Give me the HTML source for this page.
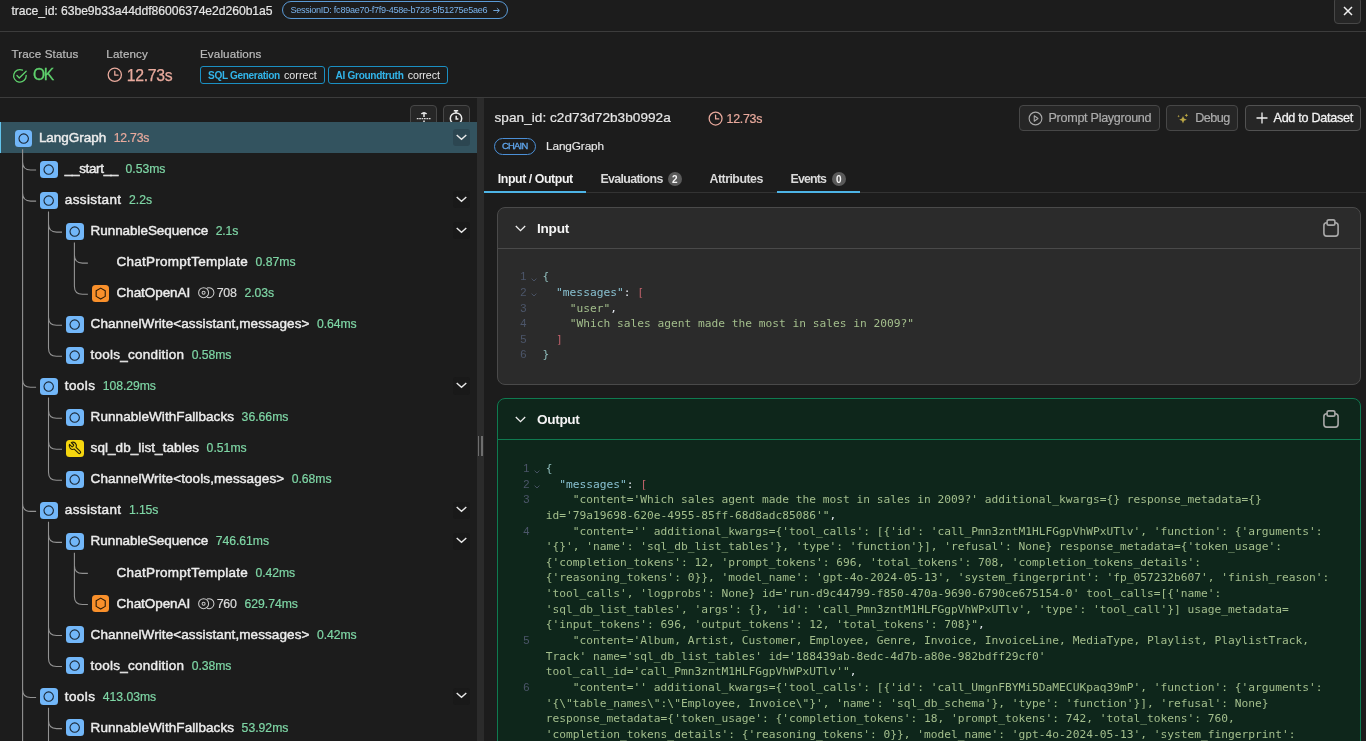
<!DOCTYPE html>
<html lang="en"><head><meta charset="utf-8"><title>Trace details</title>
<style>
html,body{margin:0;padding:0;}
html{background:#1c1c1c;}
body{width:1366px;height:741px;overflow:hidden;background:#1c1c1c;font-family:"Liberation Sans", sans-serif;position:relative;color:#e6e6e6;will-change:transform;}
.abs{position:absolute;}
.hl{position:absolute;height:1px;background:#3c3c3c;}
.btn{position:absolute;box-sizing:border-box;background:#262626;border:1px solid #474747;border-radius:4px;}
.ico{position:absolute;width:17.4px;height:17.2px;border-radius:3.5px;}
.chev{position:absolute;width:17.4px;height:17.2px;border-radius:3px;}
svg{position:absolute;overflow:visible;}
.code span{font-family:"DejaVu Sans Mono", "Liberation Mono", monospace;}
</style></head><body>

<span id="t1" style="position:absolute;left:11.5px;top:2.50px;height:16px;line-height:16px;font-size:12.2px;color:#e6e6e6;white-space:pre;-webkit-text-stroke:0.2px #e6e6e6;letter-spacing:-0.063px;">trace_id: 63be9b33a44ddf86006374e2d260b1a5</span>
<div class="abs" style="left:282px;top:1.3px;width:226px;height:18px;box-sizing:border-box;border:1px solid #5a9ad6;border-radius:9px;"></div>
<span id="t2" style="position:absolute;left:290.4px;top:4.40px;height:12px;line-height:12px;font-size:9.1px;color:#7ab3ec;white-space:pre;letter-spacing:-0.275px;">SessionID: fc89ae70-f7f9-458e-b728-5f51275e5ae6</span>
<svg style="left:492.5px;top:7.2px" width="7" height="7" viewBox="0 0 7 7"><path d="M0.3 3.5H6.2M3.9 1.2L6.3 3.5L3.9 5.8" fill="none" stroke="#7ab3ec" stroke-width="0.9"/></svg>
<div class="btn" style="left:1334px;top:-3px;width:27px;height:27px;"></div>
<svg style="left:1342.5px;top:6px" width="10" height="10" viewBox="0 0 10 10"><path d="M1 1L9 9M9 1L1 9" stroke="#f0f0f0" stroke-width="1.5" fill="none"/></svg>
<div class="hl" style="left:0;top:31px;width:1366px;"></div>
<span id="t3" style="position:absolute;left:11.5px;top:46.20px;height:15px;line-height:15px;font-size:11.6px;color:#bcbcbc;white-space:pre;-webkit-text-stroke:0.2px #bcbcbc;letter-spacing:0.134px;">Trace Status</span>
<span id="t4" style="position:absolute;left:106.3px;top:46.20px;height:15px;line-height:15px;font-size:11.6px;color:#bcbcbc;white-space:pre;-webkit-text-stroke:0.2px #bcbcbc;letter-spacing:0.156px;">Latency</span>
<span id="t5" style="position:absolute;left:200px;top:46.20px;height:15px;line-height:15px;font-size:11.6px;color:#bcbcbc;white-space:pre;-webkit-text-stroke:0.2px #bcbcbc;letter-spacing:0.141px;">Evaluations</span>
<svg style="left:12.1px;top:67.6px" width="15.8" height="15.8" viewBox="0 0 24 24"><path d="M21.5 11.1V12a9.5 9.5 0 1 1-5.6-8.7" fill="none" stroke="#5fd16d" stroke-width="2" stroke-linecap="round"/><path d="M7.5 11.5l3.6 3.6L21.5 4.8" fill="none" stroke="#5fd16d" stroke-width="2" stroke-linecap="round" stroke-linejoin="round"/></svg>
<span id="t6" style="position:absolute;left:33px;top:65.40px;height:20px;line-height:20px;font-size:15.6px;color:#5fd16d;white-space:pre;-webkit-text-stroke:0.3px #5fd16d;letter-spacing:-1.266px;">OK</span>
<svg style="left:107.1px;top:67.4px" width="15.6" height="15.6" viewBox="0 0 24 24"><circle cx="12" cy="12" r="10.2" fill="none" stroke="#e9aa9d" stroke-width="2"/><path d="M12 6.5V12.6H17" fill="none" stroke="#e9aa9d" stroke-width="2" stroke-linecap="round" stroke-linejoin="round"/></svg>
<span id="t7" style="position:absolute;left:126.8px;top:64.90px;height:21px;line-height:21px;font-size:15.8px;color:#e9aa9d;white-space:pre;-webkit-text-stroke:0.25px #e9aa9d;letter-spacing:-0.340px;">12.73s</span>
<div class="abs" style="left:200px;top:66px;width:125px;height:18px;box-sizing:border-box;border:1px solid #1b8fc2;border-radius:3px;"></div>
<span id="t8" style="position:absolute;left:208px;top:68.80px;height:13px;line-height:13px;font-size:10.1px;color:#32b5ea;white-space:pre;font-weight:bold;letter-spacing:-0.347px;">SQL Generation</span>
<span id="t9" style="position:absolute;left:284px;top:68.30px;height:14px;line-height:14px;font-size:10.7px;color:#e6e6e6;white-space:pre;letter-spacing:0.018px;">correct</span>
<div class="abs" style="left:328px;top:66px;width:120px;height:18px;box-sizing:border-box;border:1px solid #1b8fc2;border-radius:3px;"></div>
<span id="t10" style="position:absolute;left:335.5px;top:68.80px;height:13px;line-height:13px;font-size:10.1px;color:#32b5ea;white-space:pre;font-weight:bold;letter-spacing:-0.309px;">AI Groundtruth</span>
<span id="t11" style="position:absolute;left:407.8px;top:68.30px;height:14px;line-height:14px;font-size:10.7px;color:#e6e6e6;white-space:pre;letter-spacing:-0.096px;">correct</span>
<div class="hl" style="left:0;top:97px;width:1366px;"></div>
<div class="btn" style="left:410px;top:105px;width:27px;height:27px;"></div>
<svg style="left:415.7px;top:110.6px" width="16" height="12" viewBox="0 0 16 12"><path d="M8 1.2V6M5.4 3.1Q8 0.2 10.6 3.1" fill="none" stroke="#ececec" stroke-width="1.5"/><path d="M0.8 7.6H15.2" stroke="#dcdcdc" stroke-width="1.3" stroke-dasharray="1.7 0.7" fill="none"/><path d="M8 9.6V11.2" stroke="#ececec" stroke-width="1.5"/></svg>
<div class="btn" style="left:443px;top:105px;width:27px;height:27px;"></div>
<svg style="left:449.4px;top:109.6px" width="14" height="16" viewBox="0 0 14 16"><circle cx="7" cy="8.6" r="5.7" fill="none" stroke="#ececec" stroke-width="1.5"/><path d="M4.8 0.8H9.2M7 0.8V3M7.2 5.8V8.9H9.4" fill="none" stroke="#ececec" stroke-width="1.5"/></svg>
<div class="abs" style="left:0;top:122px;width:477px;height:31px;background:#33535f;"></div>
<div class="abs" style="left:0;top:122px;width:1.2px;height:31px;background:#62c3ec;"></div>
<svg style="left:0;top:0" width="477" height="741" viewBox="0 0 477 741"><path d="M22.6 149.3V745.0 M22.6 162.0Q22.6 170.0 30.6 170.0H36.1 M22.6 193.1Q22.6 201.1 30.6 201.1H36.1 M22.6 379.2Q22.6 387.2 30.6 387.2H36.1 M22.6 503.4Q22.6 511.4 30.6 511.4H36.1 M22.6 689.5Q22.6 697.5 30.6 697.5H36.1 M48.5 211.4V348.2 M48.5 224.1Q48.5 232.1 56.5 232.1H62.0 M48.5 317.2Q48.5 325.2 56.5 325.2H62.0 M48.5 348.2Q48.5 356.2 56.5 356.2H62.0 M74.4 242.4V286.2 M74.4 255.1Q74.4 263.1 82.4 263.1H87.9 M74.4 286.2Q74.4 294.2 82.4 294.2H87.9 M48.5 397.5V472.3 M48.5 410.3Q48.5 418.3 56.5 418.3H62.0 M48.5 441.3Q48.5 449.3 56.5 449.3H62.0 M48.5 472.3Q48.5 480.3 56.5 480.3H62.0 M48.5 521.7V658.5 M48.5 534.4Q48.5 542.4 56.5 542.4H62.0 M48.5 627.5Q48.5 635.5 56.5 635.5H62.0 M48.5 658.5Q48.5 666.5 56.5 666.5H62.0 M74.4 552.7V596.5 M74.4 565.4Q74.4 573.4 82.4 573.4H87.9 M74.4 596.5Q74.4 604.5 82.4 604.5H87.9 M48.5 707.8V745.0 M48.5 720.6Q48.5 728.6 56.5 728.6H62.0" fill="none" stroke="#929292" stroke-width="1.1"/></svg>
<div class="ico" style="left:14.5px;top:129.5px;background:#72b7f9;"></div><svg style="left:14.5px;top:129.5px" width="17.4" height="17.2" viewBox="0 0 17.4 17.2"><circle cx="8.7" cy="8.6" r="4.7" fill="none" stroke="#1b2836" stroke-width="1.1"/></svg>
<span id="t12" style="position:absolute;left:38.9px;top:129.10px;height:18px;line-height:18px;font-size:13.5px;color:#ececec;white-space:pre;-webkit-text-stroke:0.45px #ececec;letter-spacing:-0.029px;">LangGraph</span>
<span id="t13" style="position:absolute;left:113.7px;top:130.10px;height:16px;line-height:16px;font-size:12.2px;color:#e9aa9d;white-space:pre;-webkit-text-stroke:0.2px #e9aa9d;letter-spacing:-0.182px;">12.73s</span>
<div class="chev" style="left:452.5px;top:129.2px;background:#2c4651;"></div>
<svg style="left:456.2px;top:133.9px" width="11" height="7" viewBox="0 0 11 7"><path d="M0.7 1L5.5 5.3L10.3 1" fill="none" stroke="#eaeaea" stroke-width="1.4"/></svg>
<div class="ico" style="left:40.4px;top:160.5px;background:#72b7f9;"></div><svg style="left:40.4px;top:160.5px" width="17.4" height="17.2" viewBox="0 0 17.4 17.2"><circle cx="8.7" cy="8.6" r="4.7" fill="none" stroke="#1b2836" stroke-width="1.1"/></svg>
<span id="t14" style="position:absolute;left:64.8px;top:160.13px;height:18px;line-height:18px;font-size:13.5px;color:#ececec;white-space:pre;-webkit-text-stroke:0.45px #ececec;letter-spacing:-0.344px;">__start__</span>
<span id="t15" style="position:absolute;left:125.5px;top:161.13px;height:16px;line-height:16px;font-size:12.2px;color:#7ed6a5;white-space:pre;-webkit-text-stroke:0.2px #7ed6a5;letter-spacing:-0.011px;">0.53ms</span>
<div class="ico" style="left:40.4px;top:191.5px;background:#72b7f9;"></div><svg style="left:40.4px;top:191.5px" width="17.4" height="17.2" viewBox="0 0 17.4 17.2"><circle cx="8.7" cy="8.6" r="4.7" fill="none" stroke="#1b2836" stroke-width="1.1"/></svg>
<span id="t16" style="position:absolute;left:64.8px;top:191.16px;height:18px;line-height:18px;font-size:13.5px;color:#ececec;white-space:pre;-webkit-text-stroke:0.45px #ececec;letter-spacing:0.380px;">assistant</span>
<span id="t17" style="position:absolute;left:129.1px;top:192.16px;height:16px;line-height:16px;font-size:12.2px;color:#7ed6a5;white-space:pre;-webkit-text-stroke:0.2px #7ed6a5;letter-spacing:-0.012px;">2.2s</span>
<div class="chev" style="left:452.5px;top:191.3px;background:#191919;"></div>
<svg style="left:456.2px;top:196.0px" width="11" height="7" viewBox="0 0 11 7"><path d="M0.7 1L5.5 5.3L10.3 1" fill="none" stroke="#eaeaea" stroke-width="1.4"/></svg>
<div class="ico" style="left:66.2px;top:222.5px;background:#72b7f9;"></div><svg style="left:66.2px;top:222.5px" width="17.4" height="17.2" viewBox="0 0 17.4 17.2"><circle cx="8.7" cy="8.6" r="4.7" fill="none" stroke="#1b2836" stroke-width="1.1"/></svg>
<span id="t18" style="position:absolute;left:90.6px;top:222.19px;height:18px;line-height:18px;font-size:13.5px;color:#ececec;white-space:pre;-webkit-text-stroke:0.45px #ececec;letter-spacing:-0.063px;">RunnableSequence</span>
<span id="t19" style="position:absolute;left:215.7px;top:223.19px;height:16px;line-height:16px;font-size:12.2px;color:#7ed6a5;white-space:pre;-webkit-text-stroke:0.2px #7ed6a5;letter-spacing:-0.137px;">2.1s</span>
<div class="chev" style="left:452.5px;top:222.3px;background:#191919;"></div>
<svg style="left:456.2px;top:227.0px" width="11" height="7" viewBox="0 0 11 7"><path d="M0.7 1L5.5 5.3L10.3 1" fill="none" stroke="#eaeaea" stroke-width="1.4"/></svg>

<span id="t20" style="position:absolute;left:116.5px;top:253.22px;height:18px;line-height:18px;font-size:13.5px;color:#ececec;white-space:pre;-webkit-text-stroke:0.45px #ececec;letter-spacing:0.260px;">ChatPromptTemplate</span>
<span id="t21" style="position:absolute;left:255.5px;top:254.22px;height:16px;line-height:16px;font-size:12.2px;color:#7ed6a5;white-space:pre;-webkit-text-stroke:0.2px #7ed6a5;letter-spacing:0.022px;">0.87ms</span>
<div class="ico" style="left:92.1px;top:284.6px;background:#f9902b;"></div><svg style="left:92.1px;top:284.6px" width="17.4" height="17.2" viewBox="0 0 17.4 17.2"><path d="M8.7 3.1L13.25 5.8V11.4L8.7 14.1L4.15 11.4V5.8Z" fill="none" stroke="#2a1a08" stroke-width="1.1" stroke-linejoin="round"/></svg>
<span id="t22" style="position:absolute;left:116.5px;top:284.25px;height:18px;line-height:18px;font-size:13.5px;color:#ececec;white-space:pre;-webkit-text-stroke:0.45px #ececec;letter-spacing:-0.060px;">ChatOpenAI</span>
<svg style="left:198.4px;top:287.4px" width="16" height="11.4" viewBox="0 0 16 11.4"><circle cx="5.6" cy="5.7" r="5" fill="none" stroke="#c8c8c8" stroke-width="1.05"/><circle cx="5.6" cy="5.7" r="1.5" fill="none" stroke="#c8c8c8" stroke-width="1.05"/><path d="M9 1.1A5 5 0 1 1 9 10.3" fill="none" stroke="#c8c8c8" stroke-width="1.05"/></svg>
<span id="t23" style="position:absolute;left:216.7px;top:285.25px;height:16px;line-height:16px;font-size:12.4px;color:#dcdcdc;white-space:pre;-webkit-text-stroke:0.2px #dcdcdc;letter-spacing:-0.296px;">708</span>
<span id="t24" style="position:absolute;left:244.5px;top:285.25px;height:16px;line-height:16px;font-size:12.2px;color:#7ed6a5;white-space:pre;-webkit-text-stroke:0.2px #7ed6a5;letter-spacing:-0.086px;">2.03s</span>
<div class="ico" style="left:66.2px;top:315.6px;background:#72b7f9;"></div><svg style="left:66.2px;top:315.6px" width="17.4" height="17.2" viewBox="0 0 17.4 17.2"><circle cx="8.7" cy="8.6" r="4.7" fill="none" stroke="#1b2836" stroke-width="1.1"/></svg>
<span id="t25" style="position:absolute;left:90.6px;top:315.28px;height:18px;line-height:18px;font-size:13.5px;color:#ececec;white-space:pre;-webkit-text-stroke:0.45px #ececec;letter-spacing:0.095px;">ChannelWrite&lt;assistant,messages&gt;</span>
<span id="t26" style="position:absolute;left:317.0px;top:316.28px;height:16px;line-height:16px;font-size:12.2px;color:#7ed6a5;white-space:pre;-webkit-text-stroke:0.2px #7ed6a5;letter-spacing:-0.061px;">0.64ms</span>
<div class="ico" style="left:66.2px;top:346.7px;background:#72b7f9;"></div><svg style="left:66.2px;top:346.7px" width="17.4" height="17.2" viewBox="0 0 17.4 17.2"><circle cx="8.7" cy="8.6" r="4.7" fill="none" stroke="#1b2836" stroke-width="1.1"/></svg>
<span id="t27" style="position:absolute;left:90.6px;top:346.31px;height:18px;line-height:18px;font-size:13.5px;color:#ececec;white-space:pre;-webkit-text-stroke:0.45px #ececec;letter-spacing:0.241px;">tools_condition</span>
<span id="t28" style="position:absolute;left:191.8px;top:347.31px;height:16px;line-height:16px;font-size:12.2px;color:#7ed6a5;white-space:pre;-webkit-text-stroke:0.2px #7ed6a5;letter-spacing:-0.095px;">0.58ms</span>
<div class="ico" style="left:40.4px;top:377.7px;background:#72b7f9;"></div><svg style="left:40.4px;top:377.7px" width="17.4" height="17.2" viewBox="0 0 17.4 17.2"><circle cx="8.7" cy="8.6" r="4.7" fill="none" stroke="#1b2836" stroke-width="1.1"/></svg>
<span id="t29" style="position:absolute;left:64.8px;top:377.34px;height:18px;line-height:18px;font-size:13.5px;color:#ececec;white-space:pre;-webkit-text-stroke:0.45px #ececec;letter-spacing:0.394px;">tools</span>
<span id="t30" style="position:absolute;left:102.8px;top:378.34px;height:16px;line-height:16px;font-size:12.2px;color:#7ed6a5;white-space:pre;-webkit-text-stroke:0.2px #7ed6a5;letter-spacing:-0.066px;">108.29ms</span>
<div class="chev" style="left:452.5px;top:377.4px;background:#191919;"></div>
<svg style="left:456.2px;top:382.1px" width="11" height="7" viewBox="0 0 11 7"><path d="M0.7 1L5.5 5.3L10.3 1" fill="none" stroke="#eaeaea" stroke-width="1.4"/></svg>
<div class="ico" style="left:66.2px;top:408.7px;background:#72b7f9;"></div><svg style="left:66.2px;top:408.7px" width="17.4" height="17.2" viewBox="0 0 17.4 17.2"><circle cx="8.7" cy="8.6" r="4.7" fill="none" stroke="#1b2836" stroke-width="1.1"/></svg>
<span id="t31" style="position:absolute;left:90.6px;top:408.37px;height:18px;line-height:18px;font-size:13.5px;color:#ececec;white-space:pre;-webkit-text-stroke:0.45px #ececec;letter-spacing:0.080px;">RunnableWithFallbacks</span>
<span id="t32" style="position:absolute;left:241.6px;top:409.37px;height:16px;line-height:16px;font-size:12.2px;color:#7ed6a5;white-space:pre;-webkit-text-stroke:0.2px #7ed6a5;letter-spacing:0.007px;">36.66ms</span>
<div class="ico" style="left:66.2px;top:439.8px;background:#f5d60f;"></div><svg style="left:67.6px;top:441.2px" width="14.4" height="14.4" viewBox="0 0 24 24"><g transform="translate(24 0) scale(-1 1)"><path d="M14.7 6.3a1 1 0 0 0 0 1.4l1.6 1.6a1 1 0 0 0 1.4 0l3.77-3.77a6 6 0 0 1-7.94 7.94l-6.91 6.91a2.12 2.12 0 0 1-3-3l6.91-6.91a6 6 0 0 1 7.94-7.94l-3.76 3.76z" fill="none" stroke="#2a2405" stroke-width="1.9" stroke-linejoin="round" stroke-linecap="round"/></g></svg>
<span id="t33" style="position:absolute;left:90.6px;top:439.40px;height:18px;line-height:18px;font-size:13.5px;color:#ececec;white-space:pre;-webkit-text-stroke:0.45px #ececec;letter-spacing:0.065px;">sql_db_list_tables</span>
<span id="t34" style="position:absolute;left:206.6px;top:440.40px;height:16px;line-height:16px;font-size:12.2px;color:#7ed6a5;white-space:pre;-webkit-text-stroke:0.2px #7ed6a5;letter-spacing:0.022px;">0.51ms</span>
<div class="ico" style="left:66.2px;top:470.8px;background:#72b7f9;"></div><svg style="left:66.2px;top:470.8px" width="17.4" height="17.2" viewBox="0 0 17.4 17.2"><circle cx="8.7" cy="8.6" r="4.7" fill="none" stroke="#1b2836" stroke-width="1.1"/></svg>
<span id="t35" style="position:absolute;left:90.6px;top:470.43px;height:18px;line-height:18px;font-size:13.5px;color:#ececec;white-space:pre;-webkit-text-stroke:0.45px #ececec;letter-spacing:0.089px;">ChannelWrite&lt;tools,messages&gt;</span>
<span id="t36" style="position:absolute;left:291.7px;top:471.43px;height:16px;line-height:16px;font-size:12.2px;color:#7ed6a5;white-space:pre;-webkit-text-stroke:0.2px #7ed6a5;letter-spacing:-0.028px;">0.68ms</span>
<div class="ico" style="left:40.4px;top:501.8px;background:#72b7f9;"></div><svg style="left:40.4px;top:501.8px" width="17.4" height="17.2" viewBox="0 0 17.4 17.2"><circle cx="8.7" cy="8.6" r="4.7" fill="none" stroke="#1b2836" stroke-width="1.1"/></svg>
<span id="t37" style="position:absolute;left:64.8px;top:501.46px;height:18px;line-height:18px;font-size:13.5px;color:#ececec;white-space:pre;-webkit-text-stroke:0.45px #ececec;letter-spacing:0.380px;">assistant</span>
<span id="t38" style="position:absolute;left:129.1px;top:502.46px;height:16px;line-height:16px;font-size:12.2px;color:#7ed6a5;white-space:pre;-webkit-text-stroke:0.2px #7ed6a5;letter-spacing:-0.146px;">1.15s</span>
<div class="chev" style="left:452.5px;top:501.6px;background:#191919;"></div>
<svg style="left:456.2px;top:506.3px" width="11" height="7" viewBox="0 0 11 7"><path d="M0.7 1L5.5 5.3L10.3 1" fill="none" stroke="#eaeaea" stroke-width="1.4"/></svg>
<div class="ico" style="left:66.2px;top:532.8px;background:#72b7f9;"></div><svg style="left:66.2px;top:532.8px" width="17.4" height="17.2" viewBox="0 0 17.4 17.2"><circle cx="8.7" cy="8.6" r="4.7" fill="none" stroke="#1b2836" stroke-width="1.1"/></svg>
<span id="t39" style="position:absolute;left:90.6px;top:532.49px;height:18px;line-height:18px;font-size:13.5px;color:#ececec;white-space:pre;-webkit-text-stroke:0.45px #ececec;letter-spacing:-0.063px;">RunnableSequence</span>
<span id="t40" style="position:absolute;left:215.7px;top:533.49px;height:16px;line-height:16px;font-size:12.2px;color:#7ed6a5;white-space:pre;-webkit-text-stroke:0.2px #7ed6a5;letter-spacing:-0.016px;">746.61ms</span>
<div class="chev" style="left:452.5px;top:532.6px;background:#191919;"></div>
<svg style="left:456.2px;top:537.3px" width="11" height="7" viewBox="0 0 11 7"><path d="M0.7 1L5.5 5.3L10.3 1" fill="none" stroke="#eaeaea" stroke-width="1.4"/></svg>

<span id="t41" style="position:absolute;left:116.5px;top:563.52px;height:18px;line-height:18px;font-size:13.5px;color:#ececec;white-space:pre;-webkit-text-stroke:0.45px #ececec;letter-spacing:0.260px;">ChatPromptTemplate</span>
<span id="t42" style="position:absolute;left:255.5px;top:564.52px;height:16px;line-height:16px;font-size:12.2px;color:#7ed6a5;white-space:pre;-webkit-text-stroke:0.2px #7ed6a5;letter-spacing:-0.061px;">0.42ms</span>
<div class="ico" style="left:92.1px;top:594.9px;background:#f9902b;"></div><svg style="left:92.1px;top:594.9px" width="17.4" height="17.2" viewBox="0 0 17.4 17.2"><path d="M8.7 3.1L13.25 5.8V11.4L8.7 14.1L4.15 11.4V5.8Z" fill="none" stroke="#2a1a08" stroke-width="1.1" stroke-linejoin="round"/></svg>
<span id="t43" style="position:absolute;left:116.5px;top:594.55px;height:18px;line-height:18px;font-size:13.5px;color:#ececec;white-space:pre;-webkit-text-stroke:0.45px #ececec;letter-spacing:-0.060px;">ChatOpenAI</span>
<svg style="left:198.4px;top:597.6px" width="16" height="11.4" viewBox="0 0 16 11.4"><circle cx="5.6" cy="5.7" r="5" fill="none" stroke="#c8c8c8" stroke-width="1.05"/><circle cx="5.6" cy="5.7" r="1.5" fill="none" stroke="#c8c8c8" stroke-width="1.05"/><path d="M9 1.1A5 5 0 1 1 9 10.3" fill="none" stroke="#c8c8c8" stroke-width="1.05"/></svg>
<span id="t44" style="position:absolute;left:216.7px;top:595.55px;height:16px;line-height:16px;font-size:12.4px;color:#dcdcdc;white-space:pre;-webkit-text-stroke:0.2px #dcdcdc;letter-spacing:-0.296px;">760</span>
<span id="t45" style="position:absolute;left:244.5px;top:595.55px;height:16px;line-height:16px;font-size:12.2px;color:#7ed6a5;white-space:pre;-webkit-text-stroke:0.2px #7ed6a5;letter-spacing:-0.016px;">629.74ms</span>
<div class="ico" style="left:66.2px;top:625.9px;background:#72b7f9;"></div><svg style="left:66.2px;top:625.9px" width="17.4" height="17.2" viewBox="0 0 17.4 17.2"><circle cx="8.7" cy="8.6" r="4.7" fill="none" stroke="#1b2836" stroke-width="1.1"/></svg>
<span id="t46" style="position:absolute;left:90.6px;top:625.58px;height:18px;line-height:18px;font-size:13.5px;color:#ececec;white-space:pre;-webkit-text-stroke:0.45px #ececec;letter-spacing:0.095px;">ChannelWrite&lt;assistant,messages&gt;</span>
<span id="t47" style="position:absolute;left:317.0px;top:626.58px;height:16px;line-height:16px;font-size:12.2px;color:#7ed6a5;white-space:pre;-webkit-text-stroke:0.2px #7ed6a5;letter-spacing:-0.061px;">0.42ms</span>
<div class="ico" style="left:66.2px;top:657.0px;background:#72b7f9;"></div><svg style="left:66.2px;top:657.0px" width="17.4" height="17.2" viewBox="0 0 17.4 17.2"><circle cx="8.7" cy="8.6" r="4.7" fill="none" stroke="#1b2836" stroke-width="1.1"/></svg>
<span id="t48" style="position:absolute;left:90.6px;top:656.61px;height:18px;line-height:18px;font-size:13.5px;color:#ececec;white-space:pre;-webkit-text-stroke:0.45px #ececec;letter-spacing:0.241px;">tools_condition</span>
<span id="t49" style="position:absolute;left:191.8px;top:657.61px;height:16px;line-height:16px;font-size:12.2px;color:#7ed6a5;white-space:pre;-webkit-text-stroke:0.2px #7ed6a5;letter-spacing:-0.061px;">0.38ms</span>
<div class="ico" style="left:40.4px;top:688.0px;background:#72b7f9;"></div><svg style="left:40.4px;top:688.0px" width="17.4" height="17.2" viewBox="0 0 17.4 17.2"><circle cx="8.7" cy="8.6" r="4.7" fill="none" stroke="#1b2836" stroke-width="1.1"/></svg>
<span id="t50" style="position:absolute;left:64.8px;top:687.64px;height:18px;line-height:18px;font-size:13.5px;color:#ececec;white-space:pre;-webkit-text-stroke:0.45px #ececec;letter-spacing:0.394px;">tools</span>
<span id="t51" style="position:absolute;left:102.8px;top:688.64px;height:16px;line-height:16px;font-size:12.2px;color:#7ed6a5;white-space:pre;-webkit-text-stroke:0.2px #7ed6a5;letter-spacing:-0.016px;">413.03ms</span>
<div class="chev" style="left:452.5px;top:687.7px;background:#191919;"></div>
<svg style="left:456.2px;top:692.4px" width="11" height="7" viewBox="0 0 11 7"><path d="M0.7 1L5.5 5.3L10.3 1" fill="none" stroke="#eaeaea" stroke-width="1.4"/></svg>
<div class="ico" style="left:66.2px;top:719.0px;background:#72b7f9;"></div><svg style="left:66.2px;top:719.0px" width="17.4" height="17.2" viewBox="0 0 17.4 17.2"><circle cx="8.7" cy="8.6" r="4.7" fill="none" stroke="#1b2836" stroke-width="1.1"/></svg>
<span id="t52" style="position:absolute;left:90.6px;top:718.67px;height:18px;line-height:18px;font-size:13.5px;color:#ececec;white-space:pre;-webkit-text-stroke:0.45px #ececec;letter-spacing:0.080px;">RunnableWithFallbacks</span>
<span id="t53" style="position:absolute;left:241.6px;top:719.67px;height:16px;line-height:16px;font-size:12.2px;color:#7ed6a5;white-space:pre;-webkit-text-stroke:0.2px #7ed6a5;letter-spacing:0.007px;">53.92ms</span>
<div class="abs" style="left:477px;top:98px;width:7px;height:643px;background:#2b2b2b;"></div>
<div class="abs" style="left:478.2px;top:435.5px;width:1.3px;height:20.4px;background:#6e6e6e;"></div>
<div class="abs" style="left:481.4px;top:435.5px;width:1.3px;height:20.4px;background:#6e6e6e;"></div>
<span id="t54" style="position:absolute;left:494.5px;top:109.40px;height:18px;line-height:18px;font-size:13.6px;color:#e6e6e6;white-space:pre;-webkit-text-stroke:0.2px #e6e6e6;letter-spacing:0.037px;">span_id: c2d73d72b3b0992a</span>
<svg style="left:707.8px;top:110.9px" width="15.2" height="15.2" viewBox="0 0 24 24"><circle cx="12" cy="12" r="10.2" fill="none" stroke="#e9aa9d" stroke-width="2"/><path d="M12 6.5V12.6H17" fill="none" stroke="#e9aa9d" stroke-width="2" stroke-linecap="round" stroke-linejoin="round"/></svg>
<span id="t55" style="position:absolute;left:726.5px;top:110.60px;height:16px;line-height:16px;font-size:12.4px;color:#e9aa9d;white-space:pre;-webkit-text-stroke:0.2px #e9aa9d;letter-spacing:-0.251px;">12.73s</span>
<div class="btn" style="left:1019px;top:105px;width:140.5px;height:26px;"></div>
<svg style="left:1028px;top:110.6px" width="15" height="15" viewBox="0 0 24 24"><circle cx="12" cy="12" r="10.2" fill="none" stroke="#a9a9a9" stroke-width="1.8"/><path d="M10 7.6L16 12L10 16.4Z" fill="none" stroke="#a9a9a9" stroke-width="1.7" stroke-linejoin="round"/></svg>
<span id="t56" style="position:absolute;left:1048.5px;top:110.20px;height:16px;line-height:16px;font-size:12.6px;color:#acacac;white-space:pre;-webkit-text-stroke:0.2px #acacac;letter-spacing:-0.295px;">Prompt Playground</span>
<div class="btn" style="left:1166px;top:105px;width:72px;height:26px;"></div>
<svg style="left:1177px;top:112.6px" width="12" height="12" viewBox="0 0 12 12"><path d="M6 3L7.1 5.6L9.8 6.7L7.1 7.8L6 10.5L4.9 7.8L2.2 6.7L4.9 5.6Z" fill="#b9a545"/><path d="M9.4 0.6L10 1.8L11.2 2.3L10 2.9L9.4 4.1L8.8 2.9L7.6 2.3L8.8 1.8Z" fill="#b9a545"/><path d="M1.6 2L2 2.8L2.8 3.2L2 3.6L1.6 4.4L1.2 3.6L0.4 3.2L1.2 2.8Z" fill="#b9a545"/></svg>
<span id="t57" style="position:absolute;left:1195.3px;top:110.20px;height:16px;line-height:16px;font-size:12.6px;color:#acacac;white-space:pre;-webkit-text-stroke:0.2px #acacac;letter-spacing:-0.565px;">Debug</span>
<div class="btn" style="left:1244.6px;top:105px;width:116.4px;height:26px;border-color:#525252;"></div>
<svg style="left:1255.5px;top:112px" width="12" height="12" viewBox="0 0 12 12"><path d="M6 0.5V11.5M0.5 6H11.5" stroke="#f0f0f0" stroke-width="1.3" fill="none"/></svg>
<span id="t58" style="position:absolute;left:1273.5px;top:110.20px;height:16px;line-height:16px;font-size:12.6px;color:#f2f2f2;white-space:pre;-webkit-text-stroke:0.3px #f2f2f2;letter-spacing:-0.272px;">Add to Dataset</span>
<div class="abs" style="left:494px;top:137.5px;width:42px;height:17.3px;box-sizing:border-box;border:1px solid #4b8fd6;border-radius:9px;"></div>
<span id="t59" style="position:absolute;left:502px;top:140.30px;height:12px;line-height:12px;font-size:9.4px;color:#5fa5ec;white-space:pre;-webkit-text-stroke:0.3px #5fa5ec;letter-spacing:-0.734px;">CHAIN</span>
<span id="t60" style="position:absolute;left:546px;top:138.90px;height:15px;line-height:15px;font-size:11.8px;color:#e6e6e6;white-space:pre;-webkit-text-stroke:0.15px #e6e6e6;letter-spacing:-0.115px;">LangGraph</span>
<div class="hl" style="left:484px;top:192px;width:882px;background:#333;"></div>
<span id="t61" style="position:absolute;left:497.8px;top:171.20px;height:16px;line-height:16px;font-size:12.4px;color:#f2f2f2;white-space:pre;font-weight:bold;letter-spacing:-0.450px;">Input / Output</span>
<div class="abs" style="left:484px;top:190.6px;width:102px;height:2px;background:#4db4e6;"></div>
<span id="t62" style="position:absolute;left:600.5px;top:171.20px;height:16px;line-height:16px;font-size:12.4px;color:#dadada;white-space:pre;font-weight:bold;letter-spacing:-0.677px;">Evaluations</span>
<div class="abs" style="left:667.6px;top:172.2px;width:14.2px;height:14.2px;border-radius:7.1px;background:#5a5a5a;"></div>
<span id="t63" style="position:absolute;left:671.9px;top:172.80px;height:13px;line-height:13px;font-size:10px;color:#f5f5f5;white-space:pre;font-weight:bold;">2</span>
<span id="t64" style="position:absolute;left:709.5px;top:171.20px;height:16px;line-height:16px;font-size:12.4px;color:#dadada;white-space:pre;font-weight:bold;letter-spacing:-0.522px;">Attributes</span>
<span id="t65" style="position:absolute;left:790.6px;top:171.20px;height:16px;line-height:16px;font-size:12.4px;color:#dadada;white-space:pre;font-weight:bold;letter-spacing:-0.873px;">Events</span>
<div class="abs" style="left:831.6px;top:172.2px;width:14.2px;height:14.2px;border-radius:7.1px;background:#5a5a5a;"></div>
<span id="t66" style="position:absolute;left:835.9px;top:172.80px;height:13px;line-height:13px;font-size:10px;color:#f5f5f5;white-space:pre;font-weight:bold;">0</span>
<div class="abs" style="left:777px;top:190.6px;width:83px;height:2px;background:#4db4e6;"></div>
<div class="abs" style="left:497px;top:207px;width:864px;height:178px;box-sizing:border-box;background:#2b2b2b;border:1px solid #4a4a4a;border-radius:8px;"></div>
<div class="hl" style="left:498px;top:248px;width:862px;background:#4a4a4a;"></div>
<svg style="left:515.4px;top:225.3px" width="11" height="7" viewBox="0 0 11 7"><path d="M0.8 1L5.5 5.6L10.2 1" fill="none" stroke="#f0f0f0" stroke-width="1.3"/></svg>
<span id="t67" style="position:absolute;left:537px;top:219.70px;height:18px;line-height:18px;font-size:13.6px;color:#f4f4f4;white-space:pre;font-weight:bold;letter-spacing:-0.244px;">Input</span>
<svg style="left:1322.8px;top:219.2px" width="16" height="18" viewBox="0 0 16 18"><rect x="0.9" y="3.8" width="14.2" height="13.3" rx="2.8" fill="none" stroke="#a8a8a8" stroke-width="1.6"/><rect x="4.1" y="0.9" width="7.8" height="5.2" rx="1.7" fill="#2b2b2b" stroke="#a8a8a8" stroke-width="1.6"/></svg>
<div class="abs" style="left:497px;top:398px;width:864px;height:360px;box-sizing:border-box;background:#0e261b;border:1px solid #0f7a50;border-radius:8px;"></div>
<div class="hl" style="left:498px;top:439px;width:862px;background:#0f7a50;"></div>
<svg style="left:515.4px;top:416.3px" width="11" height="7" viewBox="0 0 11 7"><path d="M0.8 1L5.5 5.6L10.2 1" fill="none" stroke="#f0f0f0" stroke-width="1.3"/></svg>
<span id="t68" style="position:absolute;left:537px;top:410.70px;height:18px;line-height:18px;font-size:13.6px;color:#f4f4f4;white-space:pre;font-weight:bold;letter-spacing:-0.341px;">Output</span>
<svg style="left:1322.8px;top:410.4px" width="16" height="18" viewBox="0 0 16 18"><rect x="0.9" y="3.8" width="14.2" height="13.3" rx="2.8" fill="none" stroke="#a8a8a8" stroke-width="1.6"/><rect x="4.1" y="0.9" width="7.8" height="5.2" rx="1.7" fill="#0e261b" stroke="#a8a8a8" stroke-width="1.6"/></svg>
<div class="abs" style="left:506.6px;width:20px;text-align:right;top:269.29px;height:15.63px;line-height:15.63px;font-size:11.23px;color:#4c566a;font-family:"DejaVu Sans Mono", "Liberation Mono", monospace;-webkit-text-stroke-width:0.3px;">1</div><svg style="left:531.2px;top:277.7px" width="6" height="4" viewBox="0 0 6 4"><path d="M0.6 0.6L3 3L5.4 0.6" fill="none" stroke="#4c566a" stroke-width="0.9"/></svg>
<div class="code abs" style="left:542.6px;top:269.29px;height:15.63px;line-height:15.63px;font-size:11.23px;white-space:pre;font-family:"DejaVu Sans Mono", "Liberation Mono", monospace;-webkit-text-stroke-width:0.3px;"><span style="color:#8fbcbb">{</span></div>
<div class="abs" style="left:506.6px;width:20px;text-align:right;top:284.92px;height:15.63px;line-height:15.63px;font-size:11.23px;color:#4c566a;font-family:"DejaVu Sans Mono", "Liberation Mono", monospace;-webkit-text-stroke-width:0.3px;">2</div><svg style="left:531.2px;top:293.3px" width="6" height="4" viewBox="0 0 6 4"><path d="M0.6 0.6L3 3L5.4 0.6" fill="none" stroke="#4c566a" stroke-width="0.9"/></svg>
<div class="code abs" style="left:542.6px;top:284.92px;height:15.63px;line-height:15.63px;font-size:11.23px;white-space:pre;font-family:"DejaVu Sans Mono", "Liberation Mono", monospace;-webkit-text-stroke-width:0.3px;"><span style="color:#e5e9f0">  </span><span style="color:#88c0d0">"messages"</span><span style="color:#e5e9f0">: </span><span style="color:#bf616a">[</span></div>
<div class="abs" style="left:506.6px;width:20px;text-align:right;top:300.55px;height:15.63px;line-height:15.63px;font-size:11.23px;color:#4c566a;font-family:"DejaVu Sans Mono", "Liberation Mono", monospace;-webkit-text-stroke-width:0.3px;">3</div>
<div class="code abs" style="left:542.6px;top:300.55px;height:15.63px;line-height:15.63px;font-size:11.23px;white-space:pre;font-family:"DejaVu Sans Mono", "Liberation Mono", monospace;-webkit-text-stroke-width:0.3px;"><span style="color:#e5e9f0">    </span><span style="color:#a3be8c">"user"</span><span style="color:#e5e9f0">,</span></div>
<div class="abs" style="left:506.6px;width:20px;text-align:right;top:316.18px;height:15.63px;line-height:15.63px;font-size:11.23px;color:#4c566a;font-family:"DejaVu Sans Mono", "Liberation Mono", monospace;-webkit-text-stroke-width:0.3px;">4</div>
<div class="code abs" style="left:542.6px;top:316.18px;height:15.63px;line-height:15.63px;font-size:11.23px;white-space:pre;font-family:"DejaVu Sans Mono", "Liberation Mono", monospace;-webkit-text-stroke-width:0.3px;"><span style="color:#e5e9f0">    </span><span style="color:#a3be8c">"Which sales agent made the most in sales in 2009?"</span></div>
<div class="abs" style="left:506.6px;width:20px;text-align:right;top:331.81px;height:15.63px;line-height:15.63px;font-size:11.23px;color:#4c566a;font-family:"DejaVu Sans Mono", "Liberation Mono", monospace;-webkit-text-stroke-width:0.3px;">5</div>
<div class="code abs" style="left:542.6px;top:331.81px;height:15.63px;line-height:15.63px;font-size:11.23px;white-space:pre;font-family:"DejaVu Sans Mono", "Liberation Mono", monospace;-webkit-text-stroke-width:0.3px;"><span style="color:#e5e9f0">  </span><span style="color:#bf616a">]</span></div>
<div class="abs" style="left:506.6px;width:20px;text-align:right;top:347.44px;height:15.63px;line-height:15.63px;font-size:11.23px;color:#4c566a;font-family:"DejaVu Sans Mono", "Liberation Mono", monospace;-webkit-text-stroke-width:0.3px;">6</div>
<div class="code abs" style="left:542.6px;top:347.44px;height:15.63px;line-height:15.63px;font-size:11.23px;white-space:pre;font-family:"DejaVu Sans Mono", "Liberation Mono", monospace;-webkit-text-stroke-width:0.3px;"><span style="color:#8fbcbb">}</span></div>
<div class="abs" style="left:509.4px;width:20px;text-align:right;top:461.08px;height:15.63px;line-height:15.63px;font-size:11.23px;color:#4c566a;font-family:"DejaVu Sans Mono", "Liberation Mono", monospace;-webkit-text-stroke-width:0.3px;">1</div><svg style="left:534.0px;top:469.5px" width="6" height="4" viewBox="0 0 6 4"><path d="M0.6 0.6L3 3L5.4 0.6" fill="none" stroke="#4c566a" stroke-width="0.9"/></svg>
<div class="code abs" style="left:545.8px;top:461.08px;height:15.63px;line-height:15.63px;font-size:11.23px;white-space:pre;font-family:"DejaVu Sans Mono", "Liberation Mono", monospace;-webkit-text-stroke-width:0.3px;"><span style="color:#8fbcbb">{</span></div>
<div class="abs" style="left:509.4px;width:20px;text-align:right;top:476.71px;height:15.63px;line-height:15.63px;font-size:11.23px;color:#4c566a;font-family:"DejaVu Sans Mono", "Liberation Mono", monospace;-webkit-text-stroke-width:0.3px;">2</div><svg style="left:534.0px;top:485.1px" width="6" height="4" viewBox="0 0 6 4"><path d="M0.6 0.6L3 3L5.4 0.6" fill="none" stroke="#4c566a" stroke-width="0.9"/></svg>
<div class="code abs" style="left:545.8px;top:476.71px;height:15.63px;line-height:15.63px;font-size:11.23px;white-space:pre;font-family:"DejaVu Sans Mono", "Liberation Mono", monospace;-webkit-text-stroke-width:0.3px;"><span style="color:#e5e9f0">  </span><span style="color:#88c0d0">"messages"</span><span style="color:#e5e9f0">: </span><span style="color:#bf616a">[</span></div>
<div class="abs" style="left:509.4px;width:20px;text-align:right;top:492.34px;height:15.63px;line-height:15.63px;font-size:11.23px;color:#4c566a;font-family:"DejaVu Sans Mono", "Liberation Mono", monospace;-webkit-text-stroke-width:0.3px;">3</div>
<div class="code abs" style="left:545.8px;top:492.34px;height:15.63px;line-height:15.63px;font-size:11.23px;white-space:pre;font-family:"DejaVu Sans Mono", "Liberation Mono", monospace;-webkit-text-stroke-width:0.3px;"><span style="color:#a3be8c">    "content='Which sales agent made the most in sales in 2009?' additional_kwargs={} response_metadata={}</span></div>
<div class="code abs" style="left:545.8px;top:507.97px;height:15.63px;line-height:15.63px;font-size:11.23px;white-space:pre;font-family:"DejaVu Sans Mono", "Liberation Mono", monospace;-webkit-text-stroke-width:0.3px;"><span style="color:#a3be8c">id='79a19698-620e-4955-85ff-68d8adc85086'"</span><span style="color:#e5e9f0">,</span></div>
<div class="abs" style="left:509.4px;width:20px;text-align:right;top:523.60px;height:15.63px;line-height:15.63px;font-size:11.23px;color:#4c566a;font-family:"DejaVu Sans Mono", "Liberation Mono", monospace;-webkit-text-stroke-width:0.3px;">4</div>
<div class="code abs" style="left:545.8px;top:523.60px;height:15.63px;line-height:15.63px;font-size:11.23px;white-space:pre;font-family:"DejaVu Sans Mono", "Liberation Mono", monospace;-webkit-text-stroke-width:0.3px;"><span style="color:#a3be8c">    "content='' additional_kwargs={'tool_calls': [{'id': 'call_Pmn3zntM1HLFGgpVhWPxUTlv', 'function': {'arguments':</span></div>
<div class="code abs" style="left:545.8px;top:539.23px;height:15.63px;line-height:15.63px;font-size:11.23px;white-space:pre;font-family:"DejaVu Sans Mono", "Liberation Mono", monospace;-webkit-text-stroke-width:0.3px;"><span style="color:#a3be8c">'{}', 'name': 'sql_db_list_tables'}, 'type': 'function'}], 'refusal': None} response_metadata={'token_usage':</span></div>
<div class="code abs" style="left:545.8px;top:554.86px;height:15.63px;line-height:15.63px;font-size:11.23px;white-space:pre;font-family:"DejaVu Sans Mono", "Liberation Mono", monospace;-webkit-text-stroke-width:0.3px;"><span style="color:#a3be8c">{'completion_tokens': 12, 'prompt_tokens': 696, 'total_tokens': 708, 'completion_tokens_details':</span></div>
<div class="code abs" style="left:545.8px;top:570.49px;height:15.63px;line-height:15.63px;font-size:11.23px;white-space:pre;font-family:"DejaVu Sans Mono", "Liberation Mono", monospace;-webkit-text-stroke-width:0.3px;"><span style="color:#a3be8c">{'reasoning_tokens': 0}}, 'model_name': 'gpt-4o-2024-05-13', 'system_fingerprint': 'fp_057232b607', 'finish_reason':</span></div>
<div class="code abs" style="left:545.8px;top:586.12px;height:15.63px;line-height:15.63px;font-size:11.23px;white-space:pre;font-family:"DejaVu Sans Mono", "Liberation Mono", monospace;-webkit-text-stroke-width:0.3px;"><span style="color:#a3be8c">'tool_calls', 'logprobs': None} id='run-d9c44799-f850-470a-9690-6790ce675154-0' tool_calls=[{'name':</span></div>
<div class="code abs" style="left:545.8px;top:601.75px;height:15.63px;line-height:15.63px;font-size:11.23px;white-space:pre;font-family:"DejaVu Sans Mono", "Liberation Mono", monospace;-webkit-text-stroke-width:0.3px;"><span style="color:#a3be8c">'sql_db_list_tables', 'args': {}, 'id': 'call_Pmn3zntM1HLFGgpVhWPxUTlv', 'type': 'tool_call'}] usage_metadata=</span></div>
<div class="code abs" style="left:545.8px;top:617.38px;height:15.63px;line-height:15.63px;font-size:11.23px;white-space:pre;font-family:"DejaVu Sans Mono", "Liberation Mono", monospace;-webkit-text-stroke-width:0.3px;"><span style="color:#a3be8c">{'input_tokens': 696, 'output_tokens': 12, 'total_tokens': 708}"</span><span style="color:#e5e9f0">,</span></div>
<div class="abs" style="left:509.4px;width:20px;text-align:right;top:633.01px;height:15.63px;line-height:15.63px;font-size:11.23px;color:#4c566a;font-family:"DejaVu Sans Mono", "Liberation Mono", monospace;-webkit-text-stroke-width:0.3px;">5</div>
<div class="code abs" style="left:545.8px;top:633.01px;height:15.63px;line-height:15.63px;font-size:11.23px;white-space:pre;font-family:"DejaVu Sans Mono", "Liberation Mono", monospace;-webkit-text-stroke-width:0.3px;"><span style="color:#a3be8c">    "content='Album, Artist, Customer, Employee, Genre, Invoice, InvoiceLine, MediaType, Playlist, PlaylistTrack,</span></div>
<div class="code abs" style="left:545.8px;top:648.64px;height:15.63px;line-height:15.63px;font-size:11.23px;white-space:pre;font-family:"DejaVu Sans Mono", "Liberation Mono", monospace;-webkit-text-stroke-width:0.3px;"><span style="color:#a3be8c">Track' name='sql_db_list_tables' id='188439ab-8edc-4d7b-a80e-982bdff29cf0'</span></div>
<div class="code abs" style="left:545.8px;top:664.27px;height:15.63px;line-height:15.63px;font-size:11.23px;white-space:pre;font-family:"DejaVu Sans Mono", "Liberation Mono", monospace;-webkit-text-stroke-width:0.3px;"><span style="color:#a3be8c">tool_call_id='call_Pmn3zntM1HLFGgpVhWPxUTlv'"</span><span style="color:#e5e9f0">,</span></div>
<div class="abs" style="left:509.4px;width:20px;text-align:right;top:679.90px;height:15.63px;line-height:15.63px;font-size:11.23px;color:#4c566a;font-family:"DejaVu Sans Mono", "Liberation Mono", monospace;-webkit-text-stroke-width:0.3px;">6</div>
<div class="code abs" style="left:545.8px;top:679.90px;height:15.63px;line-height:15.63px;font-size:11.23px;white-space:pre;font-family:"DejaVu Sans Mono", "Liberation Mono", monospace;-webkit-text-stroke-width:0.3px;"><span style="color:#a3be8c">    "content='' additional_kwargs={'tool_calls': [{'id': 'call_UmgnFBYMi5DaMECUKpaq39mP', 'function': {'arguments':</span></div>
<div class="code abs" style="left:545.8px;top:695.53px;height:15.63px;line-height:15.63px;font-size:11.23px;white-space:pre;font-family:"DejaVu Sans Mono", "Liberation Mono", monospace;-webkit-text-stroke-width:0.3px;"><span style="color:#a3be8c">'{\"table_names\":\"Employee, Invoice\"}', 'name': 'sql_db_schema'}, 'type': 'function'}], 'refusal': None}</span></div>
<div class="code abs" style="left:545.8px;top:711.16px;height:15.63px;line-height:15.63px;font-size:11.23px;white-space:pre;font-family:"DejaVu Sans Mono", "Liberation Mono", monospace;-webkit-text-stroke-width:0.3px;"><span style="color:#a3be8c">response_metadata={'token_usage': {'completion_tokens': 18, 'prompt_tokens': 742, 'total_tokens': 760,</span></div>
<div class="code abs" style="left:545.8px;top:726.79px;height:15.63px;line-height:15.63px;font-size:11.23px;white-space:pre;font-family:"DejaVu Sans Mono", "Liberation Mono", monospace;-webkit-text-stroke-width:0.3px;"><span style="color:#a3be8c">'completion_tokens_details': {'reasoning_tokens': 0}}, 'model_name': 'gpt-4o-2024-05-13', 'system_fingerprint':</span></div>
</body></html>
